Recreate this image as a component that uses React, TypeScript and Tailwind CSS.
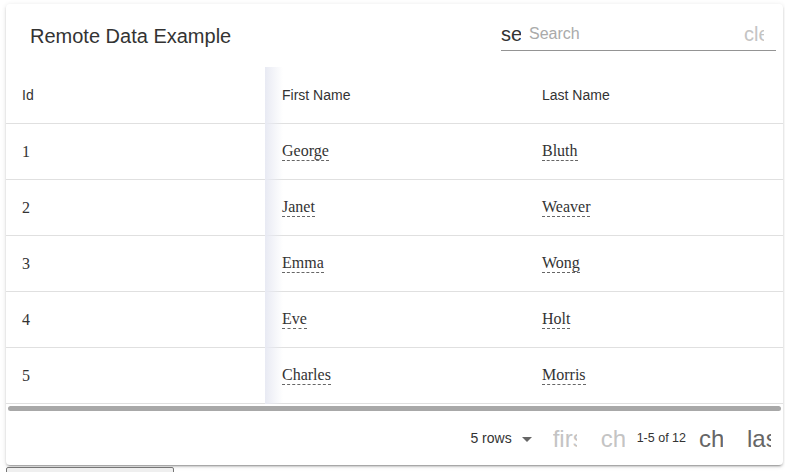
import React from "react";

type Row = { id: number; firstName: string; lastName: string };

const rows: Row[] = [
  { id: 1, firstName: "George", lastName: "Bluth" },
  { id: 2, firstName: "Janet", lastName: "Weaver" },
  { id: 3, firstName: "Emma", lastName: "Wong" },
  { id: 4, firstName: "Eve", lastName: "Holt" },
  { id: 5, firstName: "Charles", lastName: "Morris" },
];

const sans = { fontFamily: '"Liberation Sans", Arial, sans-serif' };
const serif = { fontFamily: '"Liberation Serif", "Times New Roman", serif' };

// icon font is missing, so the ligature names show clipped
function IconText({ name, size, color }: { name: string; size: number; color: string }) {
  return (
    <span
      className="block overflow-hidden whitespace-nowrap leading-none"
      style={{ width: size, height: size, fontSize: size, color }}
    >
      {name}
    </span>
  );
}

function EditCell({ value }: { value: string }) {
  return (
    <div className="flex items-center pl-[17px] border-b border-[#e0e0e0] h-[56px]">
      <span
        className="inline-block border-b border-dashed border-[#666] text-[16px] text-[#333] leading-[18px]"
        style={serif}
      >
        {value}
      </span>
    </div>
  );
}

export default function App() {
  return (
    <div className="bg-white w-[785px] h-[472px] overflow-hidden pt-[4px] pl-[6px]" style={sans}>
      <div className="w-[777px] bg-white rounded-[4px] shadow-[0_3px_1px_-2px_rgba(0,0,0,0.2),0_2px_2px_0_rgba(0,0,0,0.14),0_1px_5px_0_rgba(0,0,0,0.12)]">
        {/* toolbar */}
        <div className="h-[63px] flex items-center pl-6 pr-[7px]">
          <div className="flex-1 text-[20px] text-[#333]">Remote Data Example</div>
          <div className="w-[275px] flex items-center border-b border-[#949494] h-[30px] pb-[3px] mt-[1px]">
            <IconText name="search" size={20} color="#333" />
            <span className="ml-2 flex-1 text-[16px] text-[#aaa]">Search</span>
            <span className="mr-[12px]">
              <IconText name="clear" size={20} color="#c4c4c4" />
            </span>
          </div>
        </div>

        {/* table */}
        <div className="overflow-hidden relative">
          <div className="w-[779px] grid grid-cols-[259px_260px_260px] text-[#333]">
            <div className="h-[57px] flex items-center pl-4 border-b border-[#e0e0e0] text-[14px]">Id</div>
            <div className="h-[57px] flex items-center pl-[17px] border-b border-[#e0e0e0] text-[14px]">First Name</div>
            <div className="h-[57px] flex items-center pl-[17px] border-b border-[#e0e0e0] text-[14px]">Last Name</div>
            {rows.map((r) => (
              <React.Fragment key={r.id}>
                <div
                  className="h-[56px] flex items-center pl-4 border-b border-[#e0e0e0] text-[16px] text-[#333]"
                  style={serif}
                >
                  {r.id}
                </div>
                <EditCell value={r.firstName} />
                <EditCell value={r.lastName} />
              </React.Fragment>
            ))}
          </div>
          <div className="absolute left-[259px] top-0 h-[337px] w-[18px] bg-gradient-to-r from-[#e8eaf3] to-transparent" />
          <div className="h-[8px] flex items-center px-[2px]">
            <div className="h-[5px] w-full rounded-full bg-[#a8a8a8]" />
          </div>
        </div>

        {/* pagination */}
        <div className="h-[53px] flex items-center justify-end">
          <span className="text-[14px] text-[#333]">5 rows</span>
          <svg width="24" height="24" viewBox="0 0 24 24" className="ml-[3px]">
            <path d="M7 10l5 5 5-5z" fill="#666" />
          </svg>
          <div className="p-3 ml-[2px]">
            <IconText name="first_page" size={24} color="#c4c4c4" />
          </div>
          <div className="p-3">
            <IconText name="chevron_left" size={24} color="#c4c4c4" />
          </div>
          <span className="text-[12.5px] text-[#333] mr-[1px]">1-5 of 12</span>
          <div className="p-3">
            <IconText name="chevron_right" size={24} color="#666" />
          </div>
          <div className="p-3">
            <IconText name="last_page" size={24} color="#666" />
          </div>
        </div>
      </div>
      <button
        className="mt-[1px] h-[22px] px-[6px] text-[13px] text-black bg-[#efefef] border border-[#767676] rounded-[2px]"
        style={sans}
      >
        Increment data by one row
      </button>
    </div>
  );
}
